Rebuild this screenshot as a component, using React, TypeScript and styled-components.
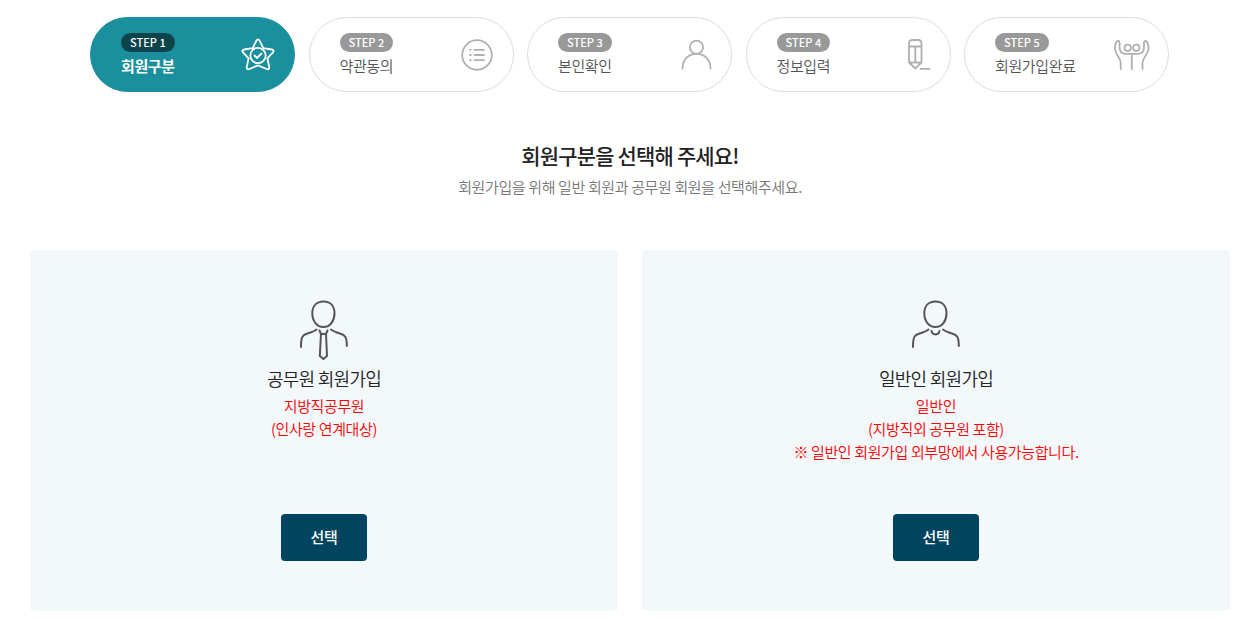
import React from "react";
import styled, { createGlobalStyle } from "styled-components";

const GlobalStyle = createGlobalStyle`
  * { box-sizing: border-box; }
  body {
    margin: 0;
    background: #fff;
    color: #222;
    font-family: "Noto Sans CJK KR", "Noto Sans", sans-serif;
    font-size: 15px;
  }
  h1, h2, p, ol { margin: 0; padding: 0; }
`;

const Page = styled.main`
  padding: 17px 25px 29px 30px;
`;

const Steps = styled.ol`
  display: flex;
  justify-content: space-between;
  gap: 12px;
  padding: 0 61px 0 60px;
  list-style: none;
`;

const Step = styled.li<{ $active?: boolean }>`
  display: flex;
  flex: 0 1 205px;
  align-items: center;
  justify-content: space-between;
  height: 75px;
  padding: 2px 19px 0 30px;
  border: 1px solid ${(p) => (p.$active ? "#1a8f9d" : "#ddd")};
  border-radius: 38px;
  background: ${(p) => (p.$active ? "#1a8f9d" : "#fff")};
  color: ${(p) => (p.$active ? "#fff" : "#b0b0b0")};
`;

const StepText = styled.div`
  display: flex;
  flex-direction: column;
  align-items: flex-start;
  gap: 2px;
`;

const Badge = styled.span<{ $active?: boolean }>`
  padding: 0 9px;
  border-radius: 10px;
  background: ${(p) => (p.$active ? "#0d444b" : "#999")};
  color: #fff;
  font-size: 11px;
  font-weight: 500;
  line-height: 19px;
  white-space: nowrap;
`;

const StepName = styled.span<{ $active?: boolean }>`
  color: ${(p) => (p.$active ? "#fff" : "#555")};
  font-size: 15px;
  font-weight: ${(p) => (p.$active ? 700 : 350)};
  letter-spacing: -0.025em;
  line-height: 24px;
  white-space: nowrap;
`;

const StepIcon = styled.svg`
  flex: none;
  width: 34px;
  height: 34px;
  margin-bottom: 2px;
  fill: none;
  stroke: currentColor;
  stroke-width: 1.8;
  stroke-linecap: round;
  stroke-linejoin: round;
`;

const Intro = styled.header`
  padding: 46px 0 50px;
  text-align: center;
`;

const Title = styled.h1`
  color: #222;
  font-size: 21px;
  font-weight: 500;
  letter-spacing: -0.04em;
  line-height: 34px;
`;

const Lead = styled.p`
  padding-top: 2px;
  color: #777;
  font-size: 15px;
  font-weight: 350;
  letter-spacing: -0.025em;
  line-height: 26px;
`;

const Cards = styled.div`
  display: grid;
  grid-template-columns: 1fr 1fr;
  gap: 24px;
`;

const Card = styled.section`
  display: flex;
  flex-direction: column;
  align-items: center;
  padding: 50px 20px;
  border-radius: 4px;
  background: #f3f8fb;
  text-align: center;
`;

const PersonIcon = styled.svg`
  width: 48px;
  height: 60px;
  fill: none;
  stroke: #555;
  stroke-width: 2;
  stroke-linecap: round;
  stroke-linejoin: round;
`;

const CardTitle = styled.h2`
  padding: 3px 0 1px;
  color: #222;
  font-size: 18px;
  font-weight: 350;
  letter-spacing: -0.04em;
  line-height: 30px;
`;

const CardNote = styled.p`
  min-height: 69px;
  color: #f00;
  font-size: 15px;
  font-weight: 350;
  letter-spacing: -0.025em;
  line-height: 23px;
`;

const SelectButton = styled.button`
  height: 47px;
  margin-top: 51px;
  padding: 0 30px 2px;
  border: 0;
  border-radius: 4px;
  background: #004460;
  color: #fff;
  font-family: inherit;
  font-size: 15px;
  font-weight: 500;
  letter-spacing: -0.025em;
  cursor: pointer;
`;

const steps = [
  {
    name: "회원구분",
    icon: (
      <>
        <path d="M15.4 2.7Q17 0 18.6 2.7L22.3 10.2L30.8 11.5Q33.8 12.2 31.8 14.6L26.4 20.4L28.2 28.9Q28.6 32.2 25.6 31L17 27.4L8.4 31Q5.4 32.2 5.8 28.9L7.6 20.4L2.2 14.6Q.2 12.2 3.2 11.5L11.7 10.2Z" />
        <circle cx="17" cy="17.5" r="7.7" />
        <path d="m13.5 17.5 2.5 2.5 4.500-4.500" />
      </>
    ),
  },
  {
    name: "약관동의",
    icon: (
      <>
        <circle cx="17" cy="17" r="14.8" />
        <path d="M10 11.8h.8M14.5 11.8h9.5M10 17h.8M14.5 17h9.5M10 22.2h.8M14.5 22.2h9.5" />
      </>
    ),
  },
  {
    name: "본인확인",
    icon: (
      <>
        <circle cx="18.500" cy="9.3" r="6.6" />
        <path d="M4.500 30.500c0-9 6-14.600 14-14.600S32.500 21.500 32.500 30.500" />
      </>
    ),
  },
  {
    name: "정보입력",
    icon: (
      <>
        <path d="M12 5.5Q12 2 15.5 2H21Q24.500 2 24.500 5.500V24.500L18.300 30.500 12 24.500ZM12 8.500H24.500M12 24.500H24.500M18.300 8.500V24.500M23.500 30.800H32.500" />
      </>
    ),
  },
  {
    name: "회원가입완료",
    icon: (
      <>
        <circle cx="12.700" cy="9.800" r="3.200" />
        <circle cx="21.300" cy="9.800" r="3.200" />
        <path d="M5.700 31V25C5.700 19 0 17 0 10.500Q0 5 2.200 3.200Q5 2.200 4.600 6.200Q3.500 15.800 11 15.800H22.500Q30 15.800 29 6.200Q28.500 2.200 31.300 3.200Q33.500 5 33.500 10.500C33.500 17 27.500 19 27.500 25V31M16.800 15.800V31" />
      </>
    ),
  },
];

const shoulders = "M16.500 29.500Q14 31.500 7.500 33.500C2.500 35 1 36.500 1 47M31 29.500Q33.500 31.500 40 33.500C45 35 46.800 36.500 46.800 46";
const head = "M23.500 1.500C30.500 1.500 34.500 6 34.500 13.500C34.500 21 30 27 23.500 27S12.300 21 12.300 13.500C12.300 6 16.500 1.500 23.500 1.500Z";

const memberTypes = [
  {
    title: "공무원 회원가입",
    notes: ["지방직공무원", "(인사랑 연계대상)"],
    detail: "M19.500 30.500 21 34H26L27.500 30.500M21 34 19.800 56 23.400 59 27 56 26 34",
  },
  {
    title: "일반인 회원가입",
    notes: ["일반인", "(지방직외 공무원 포함)", "※ 일반인 회원가입 외부망에서 사용가능합니다."],
    detail: "M19.500 31C20 35.500 27 35.500 27.500 31",
  },
];

export default function App() {
  return (
    <>
      <GlobalStyle />
      <Page>
        <Steps>
          {steps.map((step, i) => {
            const active = i === 0;
            return (
              <Step key={step.name} $active={active} aria-current={active ? "step" : undefined}>
                <StepText>
                  <Badge $active={active}>STEP {i + 1}</Badge>
                  <StepName $active={active}>{step.name}</StepName>
                </StepText>
                <StepIcon viewBox="0 0 34 34" overflow="visible" aria-hidden="true">
                  {step.icon}
                </StepIcon>
              </Step>
            );
          })}
        </Steps>
        <Intro>
          <Title>회원구분을 선택해 주세요!</Title>
          <Lead>회원가입을 위해 일반 회원과 공무원 회원을 선택해주세요.</Lead>
        </Intro>
        <Cards>
          {memberTypes.map((type) => (
            <Card key={type.title}>
              <PersonIcon viewBox="0 0 48 60" aria-hidden="true">
                <path d={head} />
                <path d={shoulders} />
                <path d={type.detail} />
              </PersonIcon>
              <CardTitle>{type.title}</CardTitle>
              <CardNote>
                {type.notes.map((note, i) => (
                  <React.Fragment key={note}>
                    {i > 0 && <br />}
                    {note}
                  </React.Fragment>
                ))}
              </CardNote>
              <SelectButton type="button">선택</SelectButton>
            </Card>
          ))}
        </Cards>
      </Page>
    </>
  );
}
